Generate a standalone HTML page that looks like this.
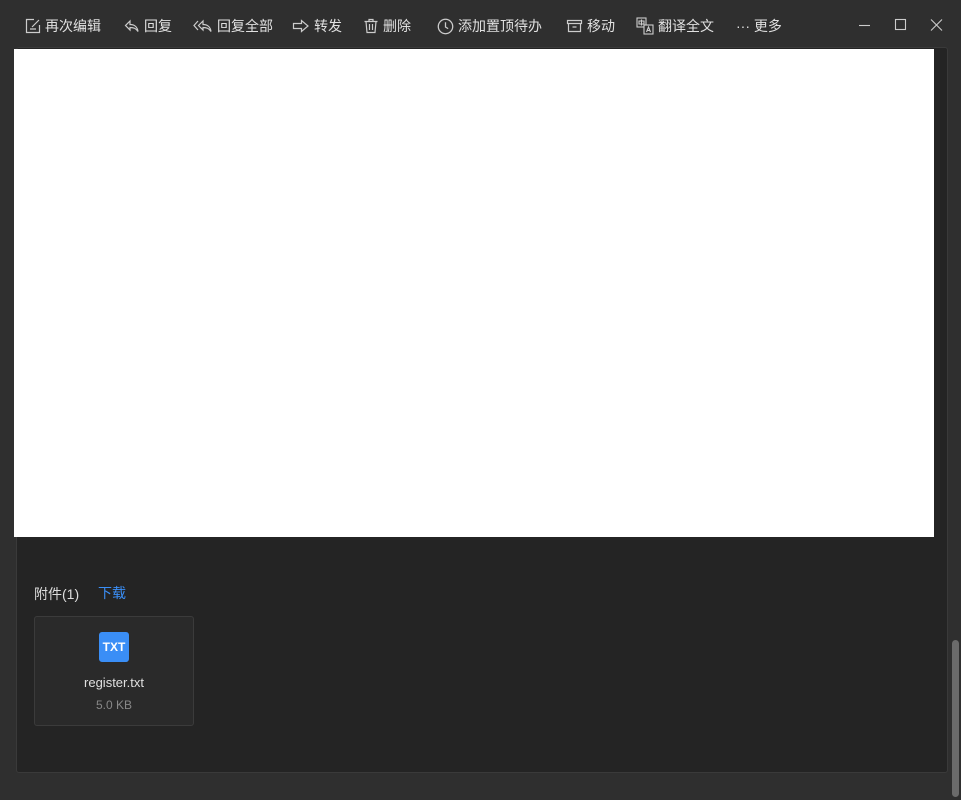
<!DOCTYPE html>
<html><head><meta charset="utf-8"><style>
*{margin:0;padding:0;box-sizing:border-box}
body{width:961px;height:800px;background:#2f2f2f;position:relative;overflow:hidden;font-family:"Liberation Sans","Noto Sans CJK SC",sans-serif;color:#ddd}
.tb{position:absolute;top:16px;height:20px;font-size:14px;line-height:20px;display:flex;align-items:center;color:#e0e0e0}
.tb svg{margin-right:4px}
.panel{position:absolute;left:16px;top:47px;width:932px;height:726px;background:#242424;border:1px solid #3a3a3a;border-radius:3px}
.white{position:absolute;left:14px;top:49px;width:920px;height:488px;background:#fff}
.thumb{position:absolute;left:952px;top:640px;width:7px;height:157px;background:#6b6b6b;border-radius:4px}
.card{position:absolute;left:34px;top:616px;width:160px;height:110px;border:1px solid #3b3b3b;border-radius:3px;background:#2a2a2a}
</style></head><body>
<div class="panel"></div>
<div class="white"></div>
<div class="thumb"></div>
<div class="tb" style="left:25px"><svg width="16" height="16" viewBox="0 0 16 16" fill="none" stroke="#ccc" stroke-width="1.2"><path d="M9 1.5H1.5v13h13V7"/><path d="M5 11h6M7 9l7-7"/></svg>再次编辑</div>
<div class="tb" style="left:124px"><svg width="16" height="16" viewBox="0 0 16 16" fill="none" stroke="#ccc" stroke-width="1.2"><path d="M6 3L1.5 7.5 6 12V9.5c4 0 6 1 8 4-0.5-4-3-7-8-7V3z"/></svg>回复</div>
<div class="tb" style="left:193px"><svg width="20" height="16" viewBox="0 0 20 16" fill="none" stroke="#ccc" stroke-width="1.2"><path d="M5 3L1 7.5 5 12"/><path d="M10 3L5.5 7.5 10 12V9.5c4 0 6 1 8 4-0.5-4-3-7-8-7V3z"/></svg>回复全部</div>
<div class="tb" style="left:292px"><svg width="18" height="16" viewBox="0 0 18 16" fill="none" stroke="#ccc" stroke-width="1.2"><path d="M1.5 5.5h8V2.5L16 8l-6.5 5.5v-3h-8z"/></svg>转发</div>
<div class="tb" style="left:363px"><svg width="16" height="16" viewBox="0 0 16 16" fill="none" stroke="#ccc" stroke-width="1.2"><path d="M1.5 3.5h13M6 3.5V1.5h4v2M3 3.5l1 11h8l1-11M6.5 6v6M9.5 6v6"/></svg>删除</div>
<div class="tb" style="left:437px"><svg width="17" height="17" viewBox="0 0 16 16" fill="none" stroke="#ccc" stroke-width="1.2"><circle cx="8" cy="8" r="6.8"/><path d="M8 4v4.5l2.5 1.5"/></svg>添加置顶待办</div>
<div class="tb" style="left:566px"><svg width="17" height="16" viewBox="0 0 16 16" fill="none" stroke="#ccc" stroke-width="1.2"><path d="M1 2.5h14v3H1zM2 5.5v8h12v-8M6 9h4"/></svg>移动</div>
<div class="tb" style="left:636px"><svg width="18" height="18" viewBox="0 0 18 18" fill="none" stroke="#ccc" stroke-width="1.1"><rect x="1" y="1" width="9" height="9"/><rect x="8" y="8" width="9" height="9" fill="#2f2f2f"/><path d="M10.5 15l2-5 2 5M11.2 13.5h2.6M3 4h5v3H3zM5.5 2.5v6"/></svg>翻译全文</div>
<div class="tb" style="left:736px">··· 更多</div>
<svg style="position:absolute;left:858px;top:18px" width="86" height="14" fill="none" stroke="#ccc" stroke-width="1.1"><path d="M1 7.5h11"/><rect x="37.5" y="1.5" width="10" height="10"/><path d="M73 1.5l11 11M84 1.5l-11 11"/></svg>
<div style="position:absolute;left:34px;top:584px;font-size:14px;color:#ddd">附件(1)</div>
<div style="position:absolute;left:98px;top:583px;font-size:14px;color:#3a8ef6">下载</div>
<div class="card">
<div style="position:absolute;left:64px;top:15px;width:30px;height:30px;background:#3a8ef6;border-radius:3px;color:#fff;font-size:12px;font-weight:bold;text-align:center;line-height:30px">TXT</div>
<div style="position:absolute;left:0;width:158px;top:58px;text-align:center;font-size:13px;color:#e0e0e0">register.txt</div>
<div style="position:absolute;left:0;width:158px;top:81px;text-align:center;font-size:12px;color:#888">5.0 KB</div>
</div>
</body></html>
